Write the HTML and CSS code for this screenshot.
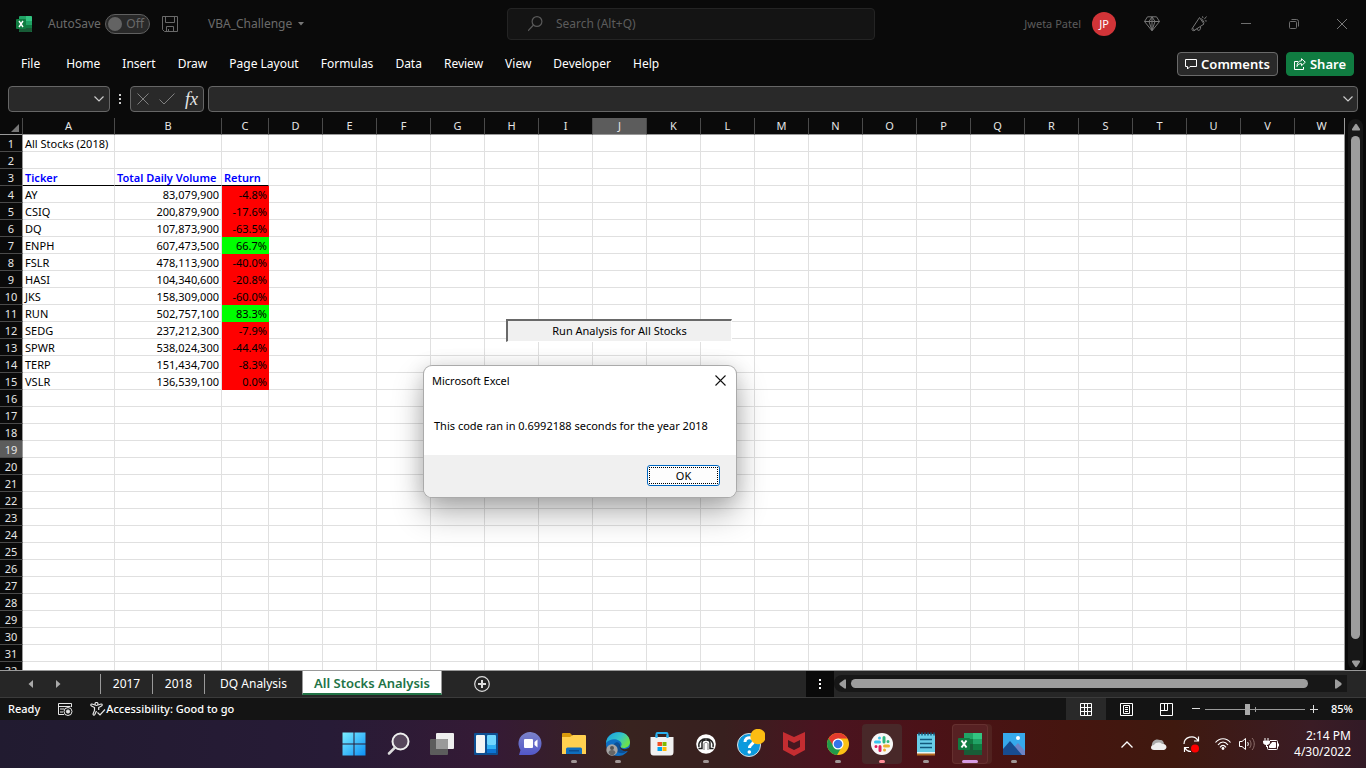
FILE: index.html
```html
<!DOCTYPE html>
<html lang="en">
<head>
<meta charset="utf-8">
<title>VBA_Challenge - Excel</title>
<link rel="stylesheet" href="styles.css">
</head>
<body>
<header class="titlebar">
  <div class="title-left">
    <svg class="logo" width="16" height="16" viewBox="0 0 16 16"><rect x="3" width="13" height="16" rx="1" fill="#21a366"/><path d="M10 0h5l1 1v4h-6z" fill="#33c481"/><path d="M10 5h6v4h-6z" fill="#21a366"/><path d="M3 9h7v3H3zM10 9h6v3h-6z" fill="#107c41"/><path d="M3 12h13v3l-1 1H4l-1-1z" fill="#185c37"/><rect y="3" width="10" height="10" rx="1" fill="#107c41"/><path d="M3 5l4 6M7 5l-4 6" stroke="#fff" stroke-width="1.4"/></svg>
    <label class="autosave" for="autosave">AutoSave</label>
    <button class="toggle" id="autosave" type="button" role="switch" aria-checked="false"><span class="knob"></span>Off</button>
    <button class="plain save" type="button" aria-label="Save"><svg width="16" height="16" viewBox="0 0 16 16" fill="none" stroke="#6a6a6a"><path d="M.5.5h15v15H2.500l-2-2zM3.500.5v6h9v-6M4.500 15.500v-5h7v5M6.500 13v2.500"/></svg></button>
    <button class="plain filename" type="button">VBA_Challenge <svg width="6" height="4" viewBox="0 0 6 4"><path d="M0 0h6L3 3.500z" fill="#777"/></svg></button>
  </div>
  <div class="search">
    <svg width="16" height="16" viewBox="0 0 16 16" fill="none" stroke="#5a5a5a" stroke-width="1.200"><circle cx="9" cy="5.500" r="4.900"/><path d="M5.500 9L0 14.800"/></svg>
    <input type="text" aria-label="Search" placeholder="Search (Alt+Q)">
  </div>
  <div class="title-right">
    <span class="user">Jweta Patel</span>
    <span class="avatar">JP</span>
    <button class="plain gem" type="button" aria-label="Premium"><svg width="16" height="16" viewBox="0 0 16 16" fill="none" stroke="#777"><path d="M3.500.8h9l3 4.700L8 14.800.5 5.500zM.5 5.500h15M5 5.500L8 14.500l3-9L8 .8zM8 1v13"/></svg></button>
    <button class="plain pen" type="button" aria-label="Coming soon"><svg width="16" height="16" viewBox="0 0 16 16" fill="none" stroke="#777"><path d="M8.500 1.500l-7.300 11c-.7 1.500.5 2.700 2 2L13 8zM1.500 12l2.500 3M6 12.500c0 3 4 2.500 3.600-1.500M10.500 2.500l2.700 4M11.500.3l.5 1.800M15.500.5l-2.200 2.700M15.800 5l-2-.2"/></svg></button>
    <button class="plain win" type="button" aria-label="Minimize"><svg width="10" height="10" viewBox="0 0 10 10"><path d="M0 4.500h10" stroke="#6e6e6e"/></svg></button>
    <button class="plain win" type="button" aria-label="Restore"><svg width="10" height="10" viewBox="0 0 10 10" fill="none" stroke="#6e6e6e"><rect x=".5" y="2.500" width="7" height="7" rx="1"/><path d="M2.500.5h5a2 2 0 012 2v5"/></svg></button>
    <button class="plain win" type="button" aria-label="Close"><svg width="10" height="10" viewBox="0 0 10 10"><path d="M0 0l10 10M10 0L0 10" stroke="#777"/></svg></button>
  </div>
</header>

<nav class="ribbon">
  <a href="#file" class="file">File</a>
  <a href="#home">Home</a>
  <a href="#insert">Insert</a>
  <a href="#draw">Draw</a>
  <a href="#layout">Page Layout</a>
  <a href="#formulas">Formulas</a>
  <a href="#data">Data</a>
  <a href="#review">Review</a>
  <a href="#view">View</a>
  <a href="#developer">Developer</a>
  <a href="#help">Help</a>
  <div class="ribbon-actions">
    <button class="comments" type="button"><svg width="12" height="12" viewBox="0 0 12 12" fill="none" stroke="#fff"><path d="M.5 1.500h11v7H5L2.500 11V8.500h-2z"/></svg>Comments</button>
    <button class="share" type="button"><svg width="12" height="12" viewBox="0 0 12 12" fill="none" stroke="#fff"><path d="M4 3.500H.5v8h9V9M7.500.7l3.800 3.500-3.800 3.500v-2C5 5.500 4 6.500 3 8.500 3 5 4.500 3 7.500 2.700z"/></svg>Share</button>
  </div>
</nav>

<section class="formula">
  <div class="box namebox"><input type="text" aria-label="Name Box"><svg width="10" height="6" viewBox="0 0 10 6"><path d="M.5.5L5 5 9.500.5" fill="none" stroke="#ccc" stroke-width="1.200"/></svg></div>
  <svg class="grip" width="2" height="10" viewBox="0 0 2 10" fill="#ccc"><path d="M0 0h2v2H0zM0 4h2v2H0zM0 8h2v2H0z"/></svg>
  <div class="box fx">
    <button class="plain" type="button" aria-label="Cancel"><svg width="12" height="12" viewBox="0 0 12 12"><path d="M.5.5l11 11M11.500.5l-11 11" stroke="#808080"/></svg></button>
    <button class="plain" type="button" aria-label="Enter"><svg width="16" height="12" viewBox="0 0 16 12"><path d="M.5 6.500l4.500 4.500L15.500.5" fill="none" stroke="#808080"/></svg></button>
    <button class="plain fx-label" type="button">fx</button>
  </div>
  <div class="box bar"><input type="text" aria-label="Formula Bar"><svg width="10" height="6" viewBox="0 0 10 6"><path d="M.5.5L5 5 9.500.5" fill="none" stroke="#ccc" stroke-width="1.200"/></svg></div>
</section>

<main class="workspace">
  <div class="sheet">
    <table class="grid" id="grid"></table>
    <button class="macro" type="button">Run Analysis for All Stocks</button>
  </div>
  <div class="vscroll">
    <svg width="10" height="8" viewBox="0 0 10 8"><path d="M4 1.500Q5 0 6 1.500L9 6q.5 1.500-1 1.500H2Q.5 7.500 1 6z" fill="#9d9d9d"/></svg>
    <span class="vthumb"></span>
    <svg width="10" height="8" viewBox="0 0 10 8"><path d="M4 6.500Q5 8 6 6.500L9 2q.5-1.500-1-1.500H2Q.5.5 1 2z" fill="#9d9d9d"/></svg>
  </div>
</main>

<div class="tabs">
  <button class="plain prev" type="button" aria-label="Previous sheet"><svg width="5" height="8" viewBox="0 0 5 8"><path d="M5 0v8L.5 4z" fill="#aaa"/></svg></button>
  <button class="plain next" type="button" aria-label="Next sheet"><svg width="5" height="8" viewBox="0 0 5 8"><path d="M0 0v8l4.500-4z" fill="#aaa"/></svg></button>
  <button class="tab" type="button">2017</button>
  <button class="tab" type="button">2018</button>
  <button class="tab wide" type="button">DQ Analysis</button>
  <button class="tab active" type="button">All Stocks Analysis</button>
  <button class="plain add" type="button" aria-label="New sheet"><svg width="16" height="16" viewBox="0 0 16 16" fill="none" stroke="#ddd"><circle cx="8" cy="8" r="7.300" stroke-width="1.200"/><path d="M8 4v8M4 8h8" stroke-width="2"/></svg></button>
  <div class="split"><svg width="2" height="10" viewBox="0 0 2 10" fill="#fff"><path d="M0 0h2v2H0zM0 4h2v2H0zM0 8h2v2H0z"/></svg></div>
  <div class="hscroll">
    <svg width="7" height="10" viewBox="0 0 7 10"><path d="M7 .5v9H5.500L.7 6Q0 5 .7 4L5.500.5z" fill="#9d9d9d"/></svg>
    <span class="hthumb"></span>
    <svg width="7" height="10" viewBox="0 0 7 10"><path d="M0 .5v9h1.500L6.300 6Q7 5 6.300 4L1.500.5z" fill="#9d9d9d"/></svg>
  </div>
</div>

<footer class="status">
  <span class="ready">Ready</span>
  <svg class="macro-icon" width="15" height="13" viewBox="0 0 15 13" fill="none" stroke="#e6e6e6"><path d="M6 11.500H.5V.5h13V4M.5 3.500h12M2 6h4M2 9h3"/><circle cx="10" cy="8.500" r="4"/><circle cx="10" cy="8.500" r="1.600" fill="#e6e6e6"/></svg>
  <svg class="access-icon" width="16" height="14" viewBox="0 0 16 14" fill="none" stroke="#e6e6e6" stroke-width="1.200"><circle cx="6.500" cy="2" r="1.500"/><path d="M5 3L2 2C.5 1.800.5 3.500 1.500 4L4.500 5.500v3L3 12c0 1.300 1.300 1.300 1.800.5L6.500 9M8 3l3-1c1.500-.2 1.500 1.500.5 2L8.700 5.500V8M7.500 10.500L10 13l5-5.500"/></svg>
  <span class="access">Accessibility: Good to go</span>
  <button class="plain view on" type="button" aria-label="Normal view"><svg width="12" height="13" viewBox="0 0 12 13" fill="none" stroke="#fff"><path d="M.5.5h11v12H.5zM4.500.5v12M7.500.5v12M.5 4.500h11M.5 8.500h11"/></svg></button>
  <button class="plain view" type="button" aria-label="Page layout view"><svg width="13" height="13" viewBox="0 0 13 13" fill="none" stroke="#fff"><path d="M.5.5h12v12H.5zM3.500 2.500h6v8h-6zM5 4.500h3M5 6.500h3M5 8.500h3"/></svg></button>
  <button class="plain view" type="button" aria-label="Page break view"><svg width="13" height="13" viewBox="0 0 13 13" fill="none" stroke="#fff"><path d="M.5.5h12v12H.5zM.5 7.500h7V.5M4.500.5v7"/></svg></button>
  <div class="zoom">
    <button class="plain" type="button" aria-label="Zoom out"><svg width="8" height="8" viewBox="0 0 8 8"><path d="M0 3.500h8" stroke="#ddd"/></svg></button>
    <input type="range" min="0" max="100" value="42" aria-label="Zoom">
    <button class="plain" type="button" aria-label="Zoom in"><svg width="8" height="8" viewBox="0 0 8 8"><path d="M0 4.500h8M3.500 0v8" stroke="#ddd"/></svg></button>
    <span class="percent">85%</span>
  </div>
</footer>

<div class="taskbar">
  <div class="apps">
    <button class="app" type="button" aria-label="Start"><svg width="24" height="24" viewBox="0 0 24 24"><defs><linearGradient id="wg" gradientUnits="userSpaceOnUse" x1="0" y1="0" x2="24" y2="24"><stop offset="0" stop-color="#7df0ff"/><stop offset="1" stop-color="#0a8df5"/></linearGradient></defs><path d="M.5.500h11v11h-11zM12.500.500h11v11h-11zM.5 12.500h11v11h-11zM12.500 12.500h11v11h-11z" fill="url(#wg)"/></svg></button>
    <button class="app" type="button" aria-label="Search"><svg width="24" height="24" viewBox="0 0 24 24"><circle cx="14.500" cy="9.500" r="8" fill="#57465c" stroke="#eee" stroke-width="2"/><path d="M9 15.500l-6 6" stroke="#ddd" stroke-width="2.500" stroke-linecap="round"/></svg></button>
    <button class="app" type="button" aria-label="Task View"><svg width="24" height="24" viewBox="0 0 24 24"><rect x="6" y="1" width="18" height="16" rx="1" fill="#eee"/><rect y="7" width="18" height="16" rx="1" fill="#5c5c5c"/><path d="M6 7h11q1 0 1 1v9H6z" fill="#9a9a9a"/></svg></button>
    <button class="app" type="button" aria-label="Widgets"><svg width="24" height="24" viewBox="0 0 24 24"><rect y="1" width="24" height="22" rx="1" fill="#0d4f93"/><rect x="2" y="3" width="9" height="18" rx="1" fill="#f4f4f4"/><rect x="13" y="3" width="9" height="10" rx="1" fill="#70d6ff"/><path d="M13 13h9v4h-9z" fill="#2fb1f5"/><path d="M13 17h9v4h-9z" fill="#0c74d4"/></svg></button>
    <button class="app" type="button" aria-label="Chat"><svg width="24" height="24" viewBox="0 0 24 24"><defs><linearGradient id="cg" x1="0" y1="0" x2="0" y2="1"><stop offset="0" stop-color="#7b83c9"/><stop offset="1" stop-color="#5257c9"/></linearGradient></defs><path d="M1 23l1.500-5A11.500 11.500 0 1112 23z" fill="url(#cg)"/><rect x="6" y="7" width="9" height="9" rx="1" fill="#fff"/><path d="M16.500 10l3-2.500v8l-3-2.500z" fill="#fff"/></svg></button>
    <button class="app open" type="button" aria-label="File Explorer"><svg width="24" height="24" viewBox="0 0 24 24"><path d="M0 2q0-1 1-1h7l3 3H24v9H0z" fill="#d99a0b"/><path d="M0 5h8l3-2h12q1 0 1 1v18H0z" fill="#ffd050"/><path d="M4 22v-5q0-1.500 1.500-1.500h13Q20 15.500 20 17v5z" fill="#0f6ebd"/><path d="M7 18h10v1.500H7z" fill="#0b4d90"/></svg></button>
    <button class="app open" type="button" aria-label="Edge"><svg width="24" height="24" viewBox="0 0 24 24"><defs><linearGradient id="eg" x1="0" y1="0" x2="1" y2=".5"><stop offset="0" stop-color="#1a9fe0"/><stop offset=".6" stop-color="#34c5c7"/><stop offset="1" stop-color="#6be04d"/></linearGradient></defs><circle cx="12" cy="12" r="12" fill="#0f6fc4"/><path d="M0 11C1-2 23-4 24 10c0 5-5 7-9 5.500-1-1 1-1.500.5-4C14 7 5 5 0 11z" fill="url(#eg)"/><path d="M8 12c-2 6 4 10 10 9l4-3c-5 2-9 0-8-5 0-3-4-4-6-1z" fill="#0c4f94"/><path d="M14 12c-1 5 5 7 10 3v3c-5 3-12 0-10-6z" fill="#39231f"/><circle cx="6" cy="18" r="5.700" fill="#a5a5a5"/><circle cx="6" cy="16" r="2" fill="#555"/><path d="M2.500 21c0-4 7-4 7 0l-2 2h-3z" fill="#666"/></svg></button>
    <button class="app" type="button" aria-label="Store"><svg width="24" height="24" viewBox="0 0 24 24"><path d="M6.500 7V2q0-1 1-1h9q1 0 1 1v5" fill="none" stroke="#29b0ee" stroke-width="2"/><path d="M.5 5h23v15q0 3.500-3 3.500h-17q-3 0-3-3.500z" fill="#f1f1f1"/><path d="M6.500 6V3M17.500 6V3" stroke="#29b0ee" stroke-width="2"/><path d="M7.500 10H12v4H7.500z" fill="#f25022"/><path d="M12.500 10h4v4h-4z" fill="#7fba00"/><path d="M7.500 15H12v4H7.500z" fill="#00a4ef"/><path d="M12.500 15h4v4h-4z" fill="#ffb900"/></svg></button>
    <button class="app open" type="button" aria-label="Network app"><svg width="24" height="24" viewBox="0 0 24 24"><circle cx="12" cy="12" r="9.800" fill="#fff"/><path d="M4.500 16.500H8V11c0-4 8-4 8 0v5.500h3.500M5 15c-2-11 16-11 14 0" fill="none" stroke="#222" stroke-width="1.500"/><path d="M12 6v3M10 18v-6c0-2 4-2 4 0v6" fill="none" stroke="#777"/></svg></button>
    <button class="app" type="button" aria-label="Get Help"><svg width="30" height="30" viewBox="0 0 30 30"><circle cx="14" cy="16" r="11.500" fill="#0c9add" stroke="#ddd"/><path d="M10 13c0-6 9-5.500 8.500-.5-.3 3-4 3-4 6.500" fill="none" stroke="#fff" stroke-width="3"/><circle cx="14.300" cy="23" r="1.800" fill="#fff"/><circle cx="23" cy="7.500" r="7.700" fill="#fcbc12"/></svg></button>
    <button class="app" type="button" aria-label="McAfee"><svg width="24" height="24" viewBox="0 0 24 24"><path d="M1 0l11 5 11-5v18l-11 6-11-6zM6 8v7l6 3 6-3V8l-6 3z" fill="#c42d31" fill-rule="evenodd"/></svg></button>
    <button class="app open" type="button" aria-label="Chrome"><svg width="24" height="24" viewBox="0 0 24 24"><circle cx="12" cy="12" r="11" fill="#fbc116"/><path d="M2.500 6.500A11 11 0 0121.500 6.500H12L7 14z" fill="#e33b2e"/><path d="M2.500 6.500A11 11 0 0011 23l5-8.500-8.500-.5z" fill="#219a4a"/><circle cx="12" cy="12" r="5.500" fill="#fff"/><circle cx="12" cy="12" r="4.300" fill="#3474e8"/></svg></button>
    <button class="app open alert" type="button" aria-label="Slack"><svg width="24" height="24" viewBox="0 0 24 24" fill="none" stroke-width="3" stroke-linecap="round"><circle cx="12" cy="12" r="11" fill="#f7f7f7"/><path d="M9.500 10h-4M9.500 6v.1" stroke="#36c5f0"/><path d="M14 5.500V10M18 9.500v.1" stroke="#2eb67d"/><path d="M14.500 14h4M14.500 18v.1" stroke="#ecb22e"/><path d="M10 14.500v4M6 14.500v.1" stroke="#e01e5a"/></svg></button>
    <button class="app open" type="button" aria-label="Notepad"><svg width="24" height="24" viewBox="0 0 24 24"><path d="M3 21h18v2.500H3z" fill="#b56a22"/><path d="M3 2h18v19H3z" fill="#68cde8"/><path d="M3 20h18v1.500H3z" fill="#e9f7fa"/><path d="M5 .5v3M8 .5v3M11 .5v3M14 .5v3M17 .5v3M20 .5v3M6 7.500h12M6 11.500h12M6 15.500h12" stroke="#12587b" stroke-width="1.500"/></svg></button>
    <button class="app open current" type="button" aria-label="Excel"><svg width="24" height="24" viewBox="0 0 24 24"><path d="M6 1h18v22H6z" fill="#185c37"/><path d="M6 1h9v6H6z" fill="#21a366"/><path d="M15 1h9v6h-9z" fill="#33c481"/><path d="M6 7h9v5H6z" fill="#107c41"/><path d="M15 7h9v5h-9z" fill="#21a366"/><path d="M15 12h9v6h-9z" fill="#107c41"/><rect y="6" width="12" height="12" rx="1" fill="#107c41"/><path d="M3.500 8.500l5 7M8.500 8.500l-5 7" stroke="#fff" stroke-width="2"/></svg></button>
    <button class="app open" type="button" aria-label="Photos"><svg width="24" height="24" viewBox="0 0 24 24"><path d="M1 1h22v22H1z" fill="#36a9ec"/><path d="M12 15l4-4 7 8v4H12z" fill="#6c83c6"/><path d="M1 17l7-8 12 14H1z" fill="#174c90"/><circle cx="16" cy="6" r="2" fill="#fff"/></svg></button>
  </div>
  <div class="tray">
    <svg width="12" height="7" viewBox="0 0 12 7"><path d="M.5 6.500L6 1l5.500 5.500" fill="none" stroke="#fff" stroke-width="1.300"/></svg>
    <svg class="cloud" width="16" height="11" viewBox="0 0 16 11"><path d="M1 8C0 3 4-1 9 1c3 0 4 2 4 5z" fill="#aaa"/><path d="M3 11C-1 11-1 6 3 6c2-3 6-3 8-1 5-1 6 5 2 6z" fill="#eee"/></svg>
    <svg class="sync" width="17" height="17" viewBox="0 0 17 17" fill="none" stroke="#fff" stroke-width="1.200"><path d="M1 8C1 1 11-2 15 4.500M15.500.5v4.500H11M8 15.500c-3 0-5-1-6-4M1.500 16v-4.500H6"/><circle cx="12" cy="12.500" r="4" fill="red" stroke="none"/></svg>
    <svg class="wifi" width="16" height="12" viewBox="0 0 16 12" fill="none" stroke="#fff" stroke-width="1.200"><path d="M.5 4.500c4-5 11-5 15 0M3 7c3-4 7-4 10 0M5 9.300c2-2.500 4-2.500 6 0"/><circle cx="8" cy="10.500" r="1.400" fill="#fff" stroke="none"/></svg>
    <svg class="sound" width="16" height="14" viewBox="0 0 16 14" fill="none" stroke="#fff"><path d="M.5 4.500h2.500L6.500 1.500v11L3 9.500H.5zM8.500 5c1 1 1 3 0 4"/><path d="M10.500 3c2 2 2 6 0 8M13 1c3 3 3 9 0 12" stroke="#8d6f6b"/></svg>
    <svg class="battery" width="17" height="13" viewBox="0 0 17 13" fill="none" stroke="#fff"><path d="M7 2.500h6.500q1 0 1 1v7q0 1-1 1h-8q-1 0-1-1V8M15.500 5.500v3"/><path d="M2 0v2.500M5 0v2.500M3.500 6v3"/><path d="M.5 3h6v1.500q0 2-3 2t-3-2z" fill="#fff"/><path d="M6.500 8L9 4.500h3.500v5h-6z" fill="#fff"/></svg>
    <div class="clock"><span>2:14 PM</span><span>4/30/2022</span></div>
  </div>
</div>

<div class="dialog" role="dialog" aria-labelledby="dialog-title">
  <div class="dialog-head"><span id="dialog-title">Microsoft Excel</span><button class="plain" type="button" aria-label="Close"><svg width="11" height="11" viewBox="0 0 11 11"><path d="M.5.5l10 10M10.500.5l-10 10" stroke="#111" stroke-width="1.100"/></svg></button></div>
  <p class="dialog-text">This code ran in 0.6992188 seconds for the year 2018</p>
  <div class="dialog-foot"><button class="ok" type="button"><span>OK</span></button></div>
</div>
<script src="sheet.js"></script>
</body>
</html>
```

FILE: styles.css
```css
* { box-sizing: border-box; }
body {
  margin: 0;
  height: 100vh;
  display: flex;
  flex-direction: column;
  overflow: hidden;
  background: #0a0a0a;
  color: #fff;
  font: 12px/16px "Noto Sans", "Open Sans", sans-serif;
}
button, input { font: inherit; color: inherit; }
svg { display: block; flex: none; }
.plain { display: flex; align-items: center; padding: 0; border: 0; background: none; }

/* Title bar */
.titlebar {
  flex: none;
  height: 48px;
  padding-left: 16px;
  display: grid;
  grid-template-columns: 1fr 368px 1fr;
  align-items: center;
  color: #6a6a6a;
}
.title-left, .title-right { display: flex; align-items: center; }
.autosave { margin-left: 16px; width: 57px; }
.toggle {
  width: 45px;
  height: 20px;
  padding: 0 5px 0 2px;
  display: flex;
  align-items: center;
  justify-content: space-between;
  border: 1px solid #606060;
  border-radius: 10px;
  background: #292929;
  line-height: 16px;
}
.knob { width: 14px; height: 14px; border-radius: 50%; background: #636363; }
.save { margin-left: 12px; }
.filename { margin-left: 30px; gap: 6px; }
.search {
  height: 32px;
  padding-left: 20px;
  display: flex;
  align-items: center;
  gap: 12px;
  border: 1px solid #242424;
  border-radius: 4px;
  background: #141414;
}
.search input { flex: 1; min-width: 0; padding: 0; border: 0; outline: 0; background: none; }
.search input::placeholder { color: #5c5c5c; opacity: 1; }
.title-right { justify-content: flex-end; padding-right: 19px; }
.user { margin-right: 11px; color: #5c5c5c; font-size: 11px; }
.avatar {
  width: 24px;
  height: 24px;
  border-radius: 50%;
  background: #d13438;
  color: #fff;
  font-size: 11px;
  line-height: 24px;
  text-align: center;
}
.gem { margin-left: 28px; }
.pen { margin: 0 -4px 0 31px; }
.win { margin-left: 38px; }

/* Ribbon tabs */
.ribbon {
  flex: none;
  height: 32px;
  padding: 0 12px 0 21px;
  display: flex;
  align-items: center;
  gap: 22px;
}
.ribbon a { color: #fff; text-decoration: none; }
.ribbon .file { margin-right: 4px; }
.ribbon-actions { margin-left: auto; display: flex; gap: 8px; }
.ribbon-actions button {
  height: 24px;
  padding: 0 7px;
  display: flex;
  align-items: center;
  gap: 4px;
  border: 1px solid #6a6a6a;
  border-radius: 4px;
  background: #292929;
  font-size: 13px;
  font-weight: 600;
}
.ribbon-actions .share { border-color: #107c41; background: #107c41; }

/* Formula bar */
.formula { flex: none; display: flex; align-items: center; padding: 6px 8px; }
.box {
  height: 26px;
  display: flex;
  align-items: center;
  border: 1px solid #666;
  border-radius: 4px;
  background: #292929;
}
.box input { flex: 1; min-width: 0; padding: 0 6px; border: 0; outline: 0; background: none; }
.namebox { width: 102px; padding-right: 5px; }
.grip { margin: 0 9px; }
.fx { width: 74px; padding: 0 5px 0 6px; justify-content: space-between; }
.fx-label { color: #e6e6e6; font: italic 18px/20px "Liberation Serif", serif; }
.bar { flex: 1; margin-left: 4px; padding-right: 4px; }

/* Worksheet */
.workspace { flex: 1; min-height: 0; display: flex; }
.sheet {
  flex: 1;
  min-width: 0;
  position: relative;
  overflow: hidden;
  border-right: 1px solid #9a9a9a;
}
.grid {
  width: 1349px;
  table-layout: fixed;
  border-collapse: separate;
  border-spacing: 0;
  background: #fff;
  color: #000;
  font-size: 11px;
  line-height: 14px;
}
.grid th, .grid td {
  height: 17px;
  padding: 2px 2px 0;
  border-right: 1px solid #e0e0e0;
  border-bottom: 1px solid #e0e0e0;
  text-align: left;
  white-space: nowrap;
}
.grid thead th, .grid tbody th {
  background: #0a0a0a;
  color: #e6e6e6;
  font-weight: 400;
  text-align: center;
}
.grid thead th { padding: 0; border-color: #4a4a4a; border-bottom-color: #9a9a9a; line-height: 16px; }
.grid tbody th { padding: 2px 0 0; border-color: #4a4a4a; border-right-color: #9a9a9a; }
.grid thead .picked, .grid tbody .picked { background: #5c5c5c; }
.corner svg { margin: 4px 3px 0 auto; }
.grid .number { text-align: right; }
.grid td.loss, .grid td.gain { padding-right: 1px; }
.grid .heading { color: #00f; font-weight: 600; border-bottom-color: #000; }
.grid .loss { background: #f00; border-color: #f00; }
.grid .gain { background: #0f0; border-color: #0f0; }
.col-head { width: 23px; }
.col-a { width: 92px; }
.col-b { width: 107px; }
.col-c { width: 47px; }
.macro {
  position: absolute;
  left: 506px;
  top: 201px;
  width: 226px;
  height: 23px;
  padding: 0;
  border: 1px solid #fff;
  border-top: 2px solid #696969;
  border-left: 2px solid #696969;
  background: #f0f0f0;
  color: #000;
  font-size: 11px;
}
.vscroll {
  width: 15px;
  margin: 1px 3px 0;
  padding: 4px 0 2px;
  display: flex;
  flex-direction: column;
  align-items: center;
  gap: 4px;
  border-radius: 8px;
  background: #171717;
}
.vthumb { width: 9px; flex: 1; margin: 1px 0 17px; border-radius: 5px; background: #9d9d9d; }

/* Sheet tabs */
.tabs {
  flex: none;
  height: 28px;
  display: flex;
  border-top: 1px solid #9a9a9a;
  border-bottom: 1px solid #3b3b3b;
  background: #262626;
}
.prev { margin-left: 28px; }
.next { margin: 0 39px 0 23px; }
.tab {
  height: 20px;
  width: 52px;
  margin-top: 3px;
  padding: 0;
  border: 0;
  border-left: 1px solid #9a9a9a;
  background: none;
  line-height: 18px;
}
.tab.wide { width: 98px; }
.tab.active {
  width: 140px;
  height: 24px;
  margin: 0;
  padding-top: 2px;
  border: 1px solid #9a9a9a;
  border-width: 0 1px 2px;
  border-bottom-color: #217346;
  background: #fff;
  color: #217346;
  font-size: 13px;
  font-weight: 600;
}
.add { margin: 0 auto 0 32px; }
.split { width: 28px; display: flex; align-items: center; justify-content: center; background: #0a0a0a; }
.hscroll {
  width: 513px;
  height: 17px;
  margin: 4px 19px 0 0;
  padding: 0 5px;
  display: flex;
  align-items: center;
  gap: 5px;
  border-radius: 8px 0 0 8px;
  background: #171717;
}
.hthumb { flex: 1; height: 9px; margin-right: 22px; border-radius: 5px; background: #9d9d9d; }

/* Status bar */
.status { flex: none; height: 22px; display: flex; align-items: center; background: #141414; font-size: 11px; font-weight: 500; }
.ready { margin: 0 18px 0 8px; }
.macro-icon { margin-right: 17px; }
.access { margin-right: auto; }
.view { width: 40px; height: 22px; justify-content: center; }
.view.on { background: #292929; }
.zoom { display: flex; align-items: center; margin: 0 13px 0 6px; }
.zoom input { width: 100px; height: 13px; margin: 0 5px; appearance: none; background: none; }
.zoom input::-webkit-slider-runnable-track {
  height: 13px;
  background:
    linear-gradient(#9a9a9a, #9a9a9a) 50% 4px / 1px 5px no-repeat,
    linear-gradient(#9a9a9a, #9a9a9a) 0 6px / 100% 1px no-repeat;
}
.zoom input::-webkit-slider-thumb { appearance: none; width: 5px; height: 11px; margin-top: 1px; background: #aaa; }
.percent { margin-left: 13px; }

/* Taskbar */
.taskbar {
  flex: none;
  height: 48px;
  padding-left: 1px;
  display: grid;
  grid-template-columns: 1fr auto 1fr;
  align-items: center;
  background: linear-gradient(90deg, #211b30 0, #271b36 24%, #351a35 36%, #38231f 46%, #38201f 53%, #4a1420 60%, #4b1217 68%, #45150f 78%, #3f190f 86%, #3a1c25 96%, #321a26 100%);
}
.apps { grid-column: 2; display: flex; }
.app {
  position: relative;
  width: 44px;
  height: 48px;
  padding: 0;
  display: flex;
  align-items: center;
  justify-content: center;
  border: 0;
  background: none;
}
.app.open::after {
  content: "";
  position: absolute;
  bottom: 5px;
  left: 19px;
  width: 6px;
  height: 3px;
  border-radius: 2px;
  background: #a09696;
}
.app.alert, .app.current {
  height: 40px;
  width: 40px;
  margin: 4px 2px;
  border-radius: 4px;
  background: #482829;
}
.app.current {
  width: 36px;
  margin: 4px;
  background: #572123;
  box-shadow: inset 0 0 0 1px #65302f, 4px 0 0 #51221f;
}
.app.alert::after { left: 17px; bottom: 1px; background: #ff8d98; }
.app.current::after { left: 10px; bottom: 1px; width: 16px; background: #d79be2; }
.tray { display: flex; align-items: center; justify-content: flex-end; padding-right: 15px; }
.cloud { margin-left: 18px; }
.sync { margin-left: 16px; }
.wifi { margin-left: 15px; }
.sound { margin-left: 8px; }
.battery { margin-left: 8px; }
.clock { margin-left: 14px; display: flex; flex-direction: column; text-align: right; }

/* Message box */
.dialog {
  position: absolute;
  left: 424px;
  top: 366px;
  width: 312px;
  border-radius: 8px;
  overflow: hidden;
  background: #fff;
  color: #000;
  font-size: 11px;
  box-shadow: 0 0 0 1px #aaa, 0 16px 32px rgba(0, 0, 0, .3), 0 2px 20px rgba(0, 0, 0, .15);
}
.dialog-head { height: 29px; padding: 0 10px 0 8px; display: flex; align-items: center; justify-content: space-between; }
.dialog-text { margin: 0; padding: 23px 10px 21px; }
.dialog-foot { height: 42px; padding: 10px 16px; display: flex; justify-content: flex-end; background: #f0f0f0; }
.ok { width: 73px; height: 21px; padding: 1px; border: 1px solid #0067c0; border-radius: 3px; background: #fdfdfd; }
.ok span { display: block; border: 1px dotted #000; line-height: 15px; }
```

FILE: sheet.js
```js
const columns = "ABCDEFGHIJKLMNOPQRSTUVW".split("");
const rows = {
  1: ["All Stocks (2018)"],
  3: ["Ticker", "Total Daily Volume", "Return"],
  4: ["AY", "83,079,900", "-4.8%"],
  5: ["CSIQ", "200,879,900", "-17.6%"],
  6: ["DQ", "107,873,900", "-63.5%"],
  7: ["ENPH", "607,473,500", "66.7%"],
  8: ["FSLR", "478,113,900", "-40.0%"],
  9: ["HASI", "104,340,600", "-20.8%"],
  10: ["JKS", "158,309,000", "-60.0%"],
  11: ["RUN", "502,757,100", "83.3%"],
  12: ["SEDG", "237,212,300", "-7.9%"],
  13: ["SPWR", "538,024,300", "-44.4%"],
  14: ["TERP", "151,434,700", "-8.3%"],
  15: ["VSLR", "136,539,100", "0.0%"]
};

function cell(row, index) {
  const text = (rows[row] || [])[index] || "";
  const names = [];
  if (row === 3 && text) names.push("heading");
  if (row > 3 && text && index > 0) names.push("number");
  if (row > 3 && text && index === 2) names.push(parseFloat(text) > 0 ? "gain" : "loss");
  return `<td class="${names.join(" ")}">${text}</td>`;
}

let html = '<colgroup><col class="col-head"><col class="col-a"><col class="col-b"><col class="col-c"><col span="20"></colgroup>';
html += '<thead><tr><th class="corner"><svg width="8" height="8" viewBox="0 0 8 8"><path d="M8 0v8H0z" fill="#777"/></svg></th>';
html += columns.map(c => `<th scope="col" class="${c === "J" ? "picked" : ""}">${c}</th>`).join("");
html += "</tr></thead><tbody>";
for (let row = 1; row <= 32; row++) {
  html += `<tr><th scope="row" class="${row === 19 ? "picked" : ""}">${row}</th>`;
  html += columns.map((c, i) => cell(row, i)).join("") + "</tr>";
}
document.getElementById("grid").innerHTML = html + "</tbody>";
```
